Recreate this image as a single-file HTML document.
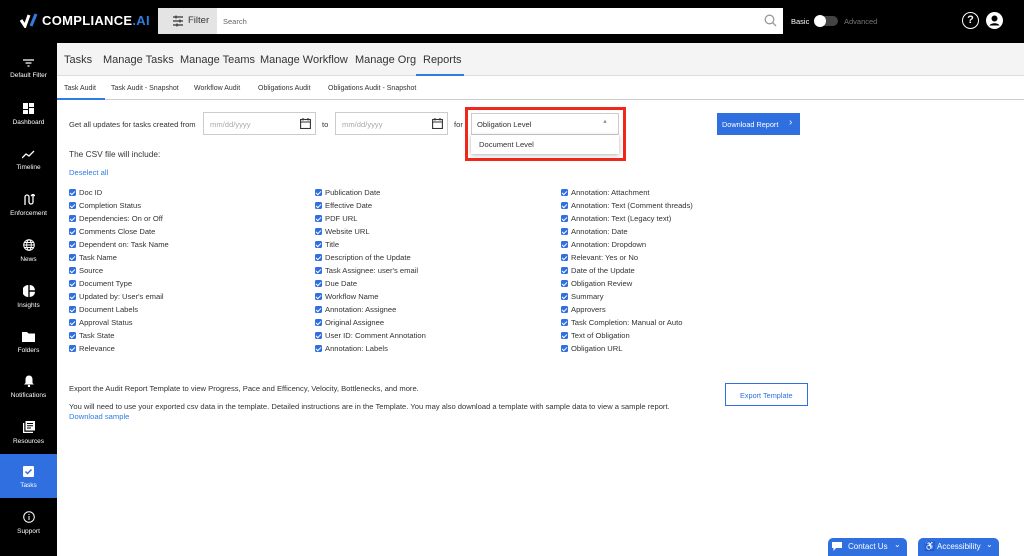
<!DOCTYPE html>
<html><head><meta charset="utf-8"><style>
*{box-sizing:border-box;margin:0;padding:0}
body{width:1024px;height:556px;overflow:hidden;background:#fff;font-family:"Liberation Sans",sans-serif;position:relative;color:#333}
.a{position:absolute}
.top{left:0;top:0;width:1024px;height:43px;background:#000}
.side{left:0;top:43px;width:57px;height:513px;background:#000}
.si{position:absolute;left:0;width:57px;text-align:center;color:#fff;font-size:6.5px}
.si svg{display:block;margin:0 auto 5px}
.nav{left:57px;top:43px;width:967px;height:33px;background:#f4f4f4;border-bottom:1px solid #ddd}
.nav span{position:absolute;top:11px;font-size:11px;color:#333}
.sub span{position:absolute;top:85px;font-size:7px;color:#333}
.t{font-size:7.6px;color:#333}
.cb{position:absolute;font-size:7.6px;color:#333;white-space:nowrap}
.cb i{display:inline-block;width:7px;height:7px;background:#2f6fe0;border-radius:1.5px;vertical-align:-1px;margin-right:3px;position:relative}
.cb i:after{content:"";position:absolute;left:2px;top:0.5px;width:2px;height:4px;border:solid #fff;border-width:0 1.2px 1.2px 0;transform:rotate(45deg)}
.blue{color:#2f7de1}
</style></head><body>
<div class="a top"></div>
<svg class="a" style="left:20px;top:12px" width="20" height="16" viewBox="0 0 20 16"><path d="M1 8 L5 14 L9 3" stroke="#fff" stroke-width="3" fill="none"/><path d="M11 14 L16 2" stroke="#2f7de1" stroke-width="3"/></svg>
<div class="a" style="left:42px;top:13px;color:#fff;font-weight:bold;font-size:13px;letter-spacing:0.3px">COMPLIANCE<span class="blue">.AI</span></div>
<div class="a" style="left:158px;top:8px;width:59px;height:26px;background:#e4e4e4"></div>
<svg class="a" style="left:172px;top:15px" width="12" height="12" viewBox="0 0 12 12" stroke="#333" stroke-width="1.2"><path d="M1 2h10M1 6h10M1 10h10"/><path d="M4 0.5v3M8 4.5v3M5 8.5v3"/></svg>
<div class="a" style="left:188px;top:15px;font-size:9.5px;color:#333">Filter</div>
<div class="a" style="left:217px;top:8px;width:566px;height:26px;background:#fff"></div>
<div class="a" style="left:223px;top:17px;font-size:7.5px;color:#666">Search</div>
<svg class="a" style="left:764px;top:14px" width="13" height="13" viewBox="0 0 13 13" stroke="#999" stroke-width="1.3" fill="none"><circle cx="5.5" cy="5.5" r="4.3"/><path d="M8.6 8.6L12 12"/></svg>
<div class="a" style="left:791px;top:17px;font-size:7.5px;color:#fff">Basic</div>
<div class="a" style="left:815px;top:16px;width:23px;height:10px;border-radius:5px;background:#444"></div>
<div class="a" style="left:814px;top:15px;width:12px;height:12px;border-radius:6px;background:#fff"></div>
<div class="a" style="left:844px;top:17px;font-size:7.5px;color:#777">Advanced</div>
<div class="a" style="left:962px;top:12px;width:17px;height:17px;border:1.8px solid #fff;border-radius:50%;color:#fff;font-size:11px;font-weight:bold;text-align:center;line-height:14px">?</div>
<svg class="a" style="left:986px;top:12px" width="17" height="17" viewBox="0 0 17 17"><circle cx="8.5" cy="8.5" r="8.5" fill="#fff"/><circle cx="8.5" cy="6.5" r="3" fill="#000"/><path d="M3.5 13.5c1.5-3 8.5-3 10 0" fill="#000"/></svg>

<div class="a side"></div>
<div class="si" style="top:59px"><svg width="11" height="8" viewBox="0 0 11 8" stroke="#fff" stroke-width="1.3"><path d="M0 1h11M2.5 4h6M4.5 7h2"/></svg>Default Filter</div>
<div class="si" style="top:103px"><svg width="11" height="11" viewBox="0 0 11 11" fill="#fff"><rect x="0" y="0" width="5" height="6"/><rect x="6" y="0" width="5" height="4"/><rect x="0" y="7" width="5" height="4"/><rect x="6" y="5" width="5" height="6"/></svg>Dashboard</div>
<div class="si" style="top:150px"><svg width="13" height="9" viewBox="0 0 13 9" stroke="#fff" stroke-width="1.3" fill="none"><path d="M0 8L4 4L7 6L12 1"/></svg>Timeline</div>
<div class="si" style="top:194px"><svg width="12" height="11" viewBox="0 0 12 11" stroke="#fff" stroke-width="1.3" fill="none"><path d="M2 11V3a2 2 0 0 1 4 0v5a2 2 0 0 0 4 0V0M8 2l2-2 2 2"/></svg>Enforcement</div>
<div class="si" style="top:239px"><svg width="12" height="12" viewBox="0 0 12 12" stroke="#fff" stroke-width="1" fill="none"><circle cx="6" cy="6" r="5.3"/><ellipse cx="6" cy="6" rx="2.3" ry="5.3"/><path d="M0.7 6h10.6M1.5 3.5h9M1.5 8.5h9"/></svg>News</div>
<div class="si" style="top:285px"><svg width="12" height="12" viewBox="0 0 12 12" fill="#fff"><path d="M5.3 0A6 6 0 0 0 5.3 12Z"/><path d="M6.7 0A5.3 5.3 0 0 1 12 5.3H6.7Z"/><path d="M6.7 6.7H12A5.3 5.3 0 0 1 6.7 12Z"/></svg>Insights</div>
<div class="si" style="top:331px"><svg width="13" height="11" viewBox="0 0 13 11" fill="#fff"><path d="M0 1h5l1.5 1.5H13V11H0Z"/></svg>Folders</div>
<div class="si" style="top:375px"><svg width="10" height="12" viewBox="0 0 10 12" fill="#fff"><path d="M5 0.5c2.5 0 3.5 2 3.5 4V8L10 9.5H0L1.5 8V4.5c0-2 1-4 3.5-4Z"/><circle cx="5" cy="11" r="1.2"/></svg>Notifications</div>
<div class="si" style="top:421px"><svg width="12" height="12" viewBox="0 0 12 12" fill="#fff"><path d="M0 2h1.3v8.7H10V12H0Z"/><rect x="2.5" y="0" width="9.5" height="9.5"/><path d="M4 2.5h6M4 4.8h6M4 7h4" stroke="#000" stroke-width="1"/></svg>Resources</div>
<div class="a" style="left:0;top:454px;width:57px;height:44px;background:#2f6fe0"></div>
<div class="si" style="top:466px"><svg width="11" height="11" viewBox="0 0 11 11"><rect width="11" height="11" rx="1" fill="#fff"/><path d="M2.5 5.5l2 2 4-4" stroke="#2f6fe0" stroke-width="1.5" fill="none"/></svg>Tasks</div>
<div class="si" style="top:511px"><svg width="12" height="12" viewBox="0 0 12 12" stroke="#fff" stroke-width="1" fill="none"><circle cx="6" cy="6" r="5.3"/><path d="M6 5v4M6 3v1"/></svg>Support</div>

<div class="a nav"></div>
<div class="nav a" style="background:none;border:0">
<span style="left:7px">Tasks</span><span style="left:46px">Manage Tasks</span><span style="left:123px">Manage Teams</span><span style="left:203px">Manage Workflow</span><span style="left:298px">Manage Org</span><span style="left:366px">Reports</span>
</div>
<div class="a" style="left:416px;top:74px;width:48px;height:2px;background:#2f7de1"></div>
<div class="sub">
<span style="left:64px">Task Audit</span><span style="left:111px">Task Audit - Snapshot</span><span style="left:194px">Workflow Audit</span><span style="left:258px">Obligations Audit</span><span style="left:328px">Obligations Audit - Snapshot</span>
</div>
<div class="a" style="left:57px;top:99px;width:967px;height:1px;background:#ccc"></div>
<div class="a" style="left:57px;top:98px;width:48px;height:2px;background:#2f7de1"></div>

<div class="a t" style="left:69px;top:120px">Get all updates for tasks created from</div>
<div class="a" style="left:203px;top:112px;width:113px;height:23px;border:1px solid #ccc"></div>
<div class="a t" style="left:210px;top:120px;color:#aaa">mm/dd/yyyy</div>
<svg class="a" style="left:300px;top:118px" width="11" height="11" viewBox="0 0 11 11" stroke="#333" fill="none" stroke-width="1.1"><rect x="0.6" y="1.5" width="9.8" height="9"/><path d="M0.6 4h9.8M3 0v2.5M8 0v2.5"/></svg>
<div class="a t" style="left:322px;top:120px">to</div>
<div class="a" style="left:335px;top:112px;width:113px;height:23px;border:1px solid #ccc"></div>
<div class="a t" style="left:342px;top:120px;color:#aaa">mm/dd/yyyy</div>
<svg class="a" style="left:432px;top:118px" width="11" height="11" viewBox="0 0 11 11" stroke="#333" fill="none" stroke-width="1.1"><rect x="0.6" y="1.5" width="9.8" height="9"/><path d="M0.6 4h9.8M3 0v2.5M8 0v2.5"/></svg>
<div class="a t" style="left:454px;top:120px">for</div>
<div class="a" style="left:465px;top:107px;width:161px;height:54px;border:3px solid #f0271c"></div>
<div class="a" style="left:471px;top:113px;width:148px;height:22px;border:1px solid #ccc;background:#fff"></div>
<div class="a t" style="left:477px;top:120px">Obligation Level</div>
<div class="a" style="left:602px;top:119px;font-size:6px;color:#999">▲</div>
<div class="a" style="left:471px;top:135px;width:148px;height:19px;background:#fff;box-shadow:0 1px 4px rgba(0,0,0,.3)"></div>
<div class="a t" style="left:479px;top:140px">Document Level</div>
<div class="a" style="left:717px;top:113px;width:83px;height:22px;background:#2f6fe0"></div>
<div class="a" style="left:722px;top:120px;font-size:7.3px;color:#fff">Download Report</div>
<div class="a" style="left:789px;top:117px;font-size:10px;color:#fff">›</div>

<div class="a" style="left:69px;top:149px;font-size:8.3px;color:#333">The CSV file will include:</div>
<div class="a t blue" style="left:69px;top:168px">Deselect all</div>

<div class="cb" style="left:69px;top:188px"><i></i>Doc ID</div>
<div class="cb" style="left:69px;top:201px"><i></i>Completion Status</div>
<div class="cb" style="left:69px;top:214px"><i></i>Dependencies: On or Off</div>
<div class="cb" style="left:69px;top:227px"><i></i>Comments Close Date</div>
<div class="cb" style="left:69px;top:240px"><i></i>Dependent on: Task Name</div>
<div class="cb" style="left:69px;top:253px"><i></i>Task Name</div>
<div class="cb" style="left:69px;top:266px"><i></i>Source</div>
<div class="cb" style="left:69px;top:279px"><i></i>Document Type</div>
<div class="cb" style="left:69px;top:292px"><i></i>Updated by: User's email</div>
<div class="cb" style="left:69px;top:305px"><i></i>Document Labels</div>
<div class="cb" style="left:69px;top:318px"><i></i>Approval Status</div>
<div class="cb" style="left:69px;top:331px"><i></i>Task State</div>
<div class="cb" style="left:69px;top:344px"><i></i>Relevance</div>

<div class="cb" style="left:315px;top:188px"><i></i>Publication Date</div>
<div class="cb" style="left:315px;top:201px"><i></i>Effective Date</div>
<div class="cb" style="left:315px;top:214px"><i></i>PDF URL</div>
<div class="cb" style="left:315px;top:227px"><i></i>Website URL</div>
<div class="cb" style="left:315px;top:240px"><i></i>Title</div>
<div class="cb" style="left:315px;top:253px"><i></i>Description of the Update</div>
<div class="cb" style="left:315px;top:266px"><i></i>Task Assignee: user's email</div>
<div class="cb" style="left:315px;top:279px"><i></i>Due Date</div>
<div class="cb" style="left:315px;top:292px"><i></i>Workflow Name</div>
<div class="cb" style="left:315px;top:305px"><i></i>Annotation: Assignee</div>
<div class="cb" style="left:315px;top:318px"><i></i>Original Assignee</div>
<div class="cb" style="left:315px;top:331px"><i></i>User ID: Comment Annotation</div>
<div class="cb" style="left:315px;top:344px"><i></i>Annotation: Labels</div>

<div class="cb" style="left:561px;top:188px"><i></i>Annotation: Attachment</div>
<div class="cb" style="left:561px;top:201px"><i></i>Annotation: Text (Comment threads)</div>
<div class="cb" style="left:561px;top:214px"><i></i>Annotation: Text (Legacy text)</div>
<div class="cb" style="left:561px;top:227px"><i></i>Annotation: Date</div>
<div class="cb" style="left:561px;top:240px"><i></i>Annotation: Dropdown</div>
<div class="cb" style="left:561px;top:253px"><i></i>Relevant: Yes or No</div>
<div class="cb" style="left:561px;top:266px"><i></i>Date of the Update</div>
<div class="cb" style="left:561px;top:279px"><i></i>Obligation Review</div>
<div class="cb" style="left:561px;top:292px"><i></i>Summary</div>
<div class="cb" style="left:561px;top:305px"><i></i>Approvers</div>
<div class="cb" style="left:561px;top:318px"><i></i>Task Completion: Manual or Auto</div>
<div class="cb" style="left:561px;top:331px"><i></i>Text of Obligation</div>
<div class="cb" style="left:561px;top:344px"><i></i>Obligation URL</div>

<div class="a t" style="left:69px;top:384px">Export the Audit Report Template to view Progress, Pace and Efficency, Velocity, Bottlenecks, and more.</div>
<div class="a t" style="left:69px;top:402px">You will need to use your exported csv data in the template. Detailed instructions are in the Template. You may also download a template with sample data to view a sample report.</div>
<div class="a t blue" style="left:69px;top:412px">Download sample</div>
<div class="a" style="left:725px;top:383px;width:83px;height:23px;border:1.5px solid #2f6fe0"></div>
<div class="a" style="left:740px;top:391px;font-size:7.3px;color:#2f6fe0">Export Template</div>

<div class="a" style="left:828px;top:538px;width:79px;height:18px;background:#2f6fe0;border-radius:5px 5px 0 0"></div>
<svg class="a" style="left:832px;top:542px" width="10" height="9" viewBox="0 0 10 9"><path d="M0 0h10v6H4L1.5 9V6H0Z" fill="#fff"/></svg>
<div class="a" style="left:848px;top:542px;font-size:8px;color:#fff">Contact Us</div>
<div class="a" style="left:894px;top:540px;font-size:8px;color:#fff">⌄</div>
<div class="a" style="left:918px;top:538px;width:81px;height:18px;background:#2f6fe0;border-radius:5px 5px 0 0"></div>
<div class="a" style="left:924px;top:541px;font-size:9px;color:#fff">♿</div>
<div class="a" style="left:937px;top:542px;font-size:8px;color:#fff">Accessibility</div>
<div class="a" style="left:986px;top:540px;font-size:8px;color:#fff">⌄</div>
</body></html>
